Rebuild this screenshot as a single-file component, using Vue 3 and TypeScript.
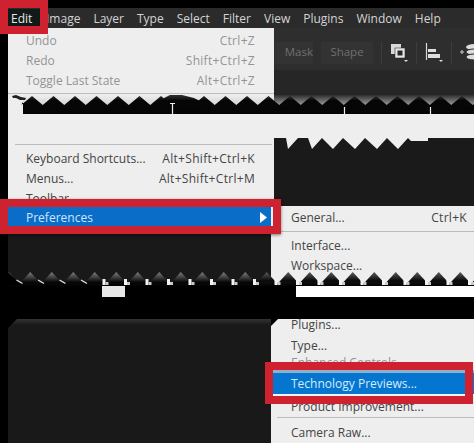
<script setup lang="ts">
const menus = ['Image', 'Layer', 'Type', 'Select', 'Filter', 'View', 'Plugins', 'Window', 'Help']

function zig(start: number, end: number, period: number, high: number, low: number): string {
  const pts: string[] = []
  for (let x = start, k = 0; x <= end; x += period / 2, k++) {
    pts.push(`${x},${k % 2 ? high : low}`)
  }
  return pts.join(' ')
}

const ridge = zig(13.25, 480, 21.5, 1, 10)
const tearBlack = `15,19 15,7 ${ridge} 480,19`
const tearBlob = '4,1 8,0 13,2 18,3 17,5 12,5 8,3 5,3'
const peakBlob = '150,9 156,3 162,0 170,-1 178,1 186,3 192,6 198,9 190,12 165,12'
const notch = '12,0 14,11 24,0 34,0 38,11 48,0 59,11 69,0 81,11 91,0 103,11 113,0 124,11 134,0 137,3 154,3 154,0'
const peaks = Array.from({ length: 23 }, (_, k) => 0.75 + k * 21.5)
const valleys = Array.from({ length: 22 }, (_, k) => 11.5 + k * 21.5)
const dashes = valleys.slice(0, 4)
const blocks = valleys.slice(4)
</script>

<template>
  <div class="page">
    <section class="top">
      <nav class="menubar">
        <span class="edit">Edit</span>
        <span v-for="m in menus" :key="m" class="menu-label">{{ m }}</span>
      </nav>
      <div class="top-body">
        <div class="menu menu-top">
          <div class="row disabled"><span>Undo</span><span class="keys">Ctrl+Z</span></div>
          <div class="row disabled"><span>Redo</span><span class="keys">Shift+Ctrl+Z</span></div>
          <div class="row disabled"><span>Toggle Last State</span><span class="keys">Alt+Ctrl+Z</span></div>
          <div class="sep"></div>
        </div>
        <div class="toolbar">
          <div class="tools">
            <span class="tbtn mask">Mask</span>
            <span class="tbtn shape">Shape</span>
            <i class="vsep"></i>
            <svg class="ticon" width="18" height="18" viewBox="0 0 18 18">
              <rect x="1" y="0" width="10" height="10" fill="#d8d8d8" />
              <rect x="5" y="4" width="10" height="10" fill="#e8e8e8" stroke="#2e2e2e" stroke-width="0.6" />
              <rect x="7.5" y="6.5" width="5" height="5" fill="#2a2a2a" />
              <path d="M14 16h4l-2 2z" fill="#ddd" />
            </svg>
            <i class="vsep"></i>
            <svg class="ticon" width="18" height="18" viewBox="0 0 18 18">
              <path d="M1.5 -1v17" stroke="#d8d8d8" stroke-width="1.2" />
              <rect x="3" y="5" width="8" height="3" fill="#ddd" />
              <rect x="3" y="10" width="12" height="4" fill="#ddd" />
              <path d="M14 16h4l-2 2z" fill="#ddd" />
            </svg>
            <i class="vsep"></i>
            <svg class="ticon" width="18" height="18" viewBox="0 0 18 18">
              <path d="M0 8h4M2 6v4" stroke="#ccc" />
              <ellipse cx="14" cy="3" rx="8" ry="3" fill="#ddd" />
              <ellipse cx="14" cy="8" rx="8" ry="3" fill="#ddd" stroke="#2e2e2e" />
              <ellipse cx="14" cy="13" rx="8" ry="3" fill="#ddd" stroke="#2e2e2e" />
            </svg>
          </div>
        </div>
      </div>
    </section>

    <svg class="tear" width="466" height="19" viewBox="0 0 466 19">
      <defs>
        <linearGradient id="bodyA" gradientUnits="userSpaceOnUse" x1="0" x2="0" y1="1" y2="11">
          <stop offset="0" stop-color="#2c2c2c" />
          <stop offset="0.45" stop-color="#060606" />
        </linearGradient>
        <linearGradient id="sideA" x1="0" x2="0" y1="0" y2="1">
          <stop offset="0" stop-color="#2f2f2f" />
          <stop offset="1" stop-color="#9a9a9a" />
        </linearGradient>
        <linearGradient id="leftA" x1="0" x2="0" y1="0" y2="1">
          <stop offset="0" stop-color="#eeeeee" />
          <stop offset="1" stop-color="#d4d4d4" />
        </linearGradient>
      </defs>
      <rect x="0" y="0" width="266" height="19" fill="#eeeeee" />
      <rect x="15" y="0" width="251" height="10" fill="url(#leftA)" />
      <rect x="266" y="0" width="200" height="10" fill="url(#sideA)" />
      <polygon :points="tearBlack" fill="url(#bodyA)" />
      <rect x="15" y="11" width="451" height="8" fill="#050505" />
      <polygon :points="tearBlob" fill="#222" />
      <polygon :points="peakBlob" fill="url(#bodyA)" />
      <path d="M164.5 9v10M162 8.5h5M336.5 12v7M422.5 12v7" stroke="#eeeeee" stroke-width="1.2" />
    </svg>

    <section class="middle">
      <div class="menu menu-mid">
        <div class="sep sep-mid"></div>
        <div class="row"><span>Keyboard Shortcuts...</span><span class="keys">Alt+Shift+Ctrl+K</span></div>
        <div class="row"><span>Menus...</span><span class="keys">Alt+Shift+Ctrl+M</span></div>
        <div class="row"><span>Toolbar</span><span></span></div>
      </div>
      <div class="dark-side">
        <svg class="notch" width="200" height="12" viewBox="0 0 200 12">
          <polygon :points="notch" fill="#eeeeee" />
        </svg>
      </div>
    </section>

    <section class="prefs">
      <div class="prefs-left">
        <div class="row active">
          <span>Preferences</span>
          <svg width="7" height="11" viewBox="0 0 7 11"><path d="M0 0l7 5.5L0 11z" fill="#fff" /></svg>
        </div>
      </div>
      <div class="submenu sub-a">
        <div class="row row-sub"><span>General...</span><span class="keys">Ctrl+K</span></div>
        <div class="sep sep-general"></div>
        <div class="row row-sub"><span>Interface...</span></div>
        <div class="row row-sub"><span>Workspace...</span></div>
      </div>
    </section>

    <svg class="tear" width="466" height="14" viewBox="0 0 466 14">
      <defs>
        <linearGradient id="ridgeL" x1="0" x2="0" y1="0" y2="1">
          <stop offset="0" stop-color="#808080" />
          <stop offset="0.85" stop-color="#060606" />
        </linearGradient>
        <linearGradient id="ridgeR" x1="0" x2="0" y1="0" y2="1">
          <stop offset="0" stop-color="#5c5c5c" />
          <stop offset="0.7" stop-color="#0c0c0c" />
        </linearGradient>
      </defs>
      <rect x="0" y="0" width="263" height="14" fill="#191919" />
      <rect x="263" y="0" width="203" height="14" fill="#eeeeee" />
      <polygon
        v-for="x in peaks"
        :key="x"
        :points="`${x - 11},12 ${x},0 ${x + 11},12`"
        :fill="x < 255 ? 'url(#ridgeL)' : 'url(#ridgeR)'"
      />
      <rect x="0" y="12" width="466" height="2" fill="#050505" />
      <polygon points="0,0 13,13 0,13" fill="#000" />
      <path
        v-for="x in dashes"
        :key="`d${x}`"
        :d="`M${x - 3} 8l6 3.5`"
        stroke="#e8e8e8"
        stroke-width="1.2"
      />
      <g v-for="x in blocks" :key="`b${x}`">
        <rect :x="x - 3" y="7" width="3" height="6" fill="#f2f2f2" />
        <rect :x="x" y="10" width="3" height="3" fill="#c8c8dc" />
      </g>
    </svg>

    <section class="gap">
      <div class="strips">
        <i class="strip-a"></i>
        <i class="strip-b"></i>
      </div>
    </section>

    <section class="bottom">
      <div class="bottom-left"></div>
      <div class="submenu sub-b">
        <div class="row row-sub torn"><span>Plugins...</span></div>
        <div class="row row-sub"><span>Type...</span></div>
        <div class="row row-sub disabled enhanced"><span>Enhanced Controls</span></div>
        <div class="row row-sub tech"><span>Technology Previews...</span></div>
        <div class="row row-sub"><span>Product Improvement...</span></div>
        <div class="sep sep-product"></div>
        <div class="row row-sub"><span>Camera Raw...</span></div>
      </div>
    </section>

    <div class="callout callout-edit"></div>
    <div class="callout callout-prefs"></div>
    <div class="callout callout-tech"></div>
  </div>
</template>

<style scoped>
.page {
  position: relative;
  width: 474px;
  height: 443px;
  box-sizing: border-box;
  padding: 8px 0 0 8px;
  background: #000;
  overflow: hidden;
  font-family: "Open Sans", "Noto Sans", sans-serif;
  font-size: 12px;
  color: #444444;
}
.menubar {
  display: flex;
  align-items: center;
  gap: 13px;
  height: 20px;
  background: #2b2b2b;
  color: #d4d4d4;
  font-size: 12px;
  white-space: nowrap;
}
.edit {
  width: 33px;
  height: 19px;
  line-height: 19px;
  padding-left: 3px;
  box-sizing: border-box;
  background: #101a18;
  color: #e8e8e8;
  margin-right: -8px;
}
.top-body {
  display: flex;
  height: 67px;
}
.menu {
  width: 266px;
  flex: none;
  background: #eeeeee;
  box-sizing: border-box;
}
.menu-top {
  padding-top: 2px;
}
.row {
  display: flex;
  align-items: center;
  justify-content: space-between;
  height: 20px;
  padding: 0 19px 0 18px;
  white-space: nowrap;
}
.keys {
  letter-spacing: 0.3px;
}
.disabled {
  color: #949494;
}
.sep {
  height: 1px;
  background: #bcbcbc;
  margin-top: 3px;
}
.toolbar {
  flex: 1;
  background: #262626;
}
.tools {
  display: flex;
  align-items: center;
  height: 42px;
  gap: 8px;
  padding: 0 0 0 1px;
  background: #2e2e2e;
}
.tbtn {
  height: 22px;
  line-height: 20px;
  margin-top: 8px;
  background: #333333;
  color: #707070;
  text-align: center;
  font-size: 11.5px;
}
.mask {
  width: 38px;
  text-align: right;
}
.shape {
  width: 52px;
}
.vsep {
  width: 1px;
  height: 22px;
  margin-top: 8px;
  background: #3c3c3c;
}
.ticon {
  flex: none;
  margin-top: 8px;
  overflow: visible;
}
.tear {
  display: block;
}
.middle {
  display: flex;
  height: 92px;
}
.menu-mid {
  padding-top: 30px;
}
.sep-mid {
  margin: 0 2px 3px 7px;
}
.dark-side {
  flex: 1;
  padding-top: 24px;
  background: linear-gradient(#eeeeee 24px, #1a1a1a 24px);
}
.notch {
  display: block;
}
.prefs {
  display: flex;
  height: 66px;
}
.prefs-left {
  width: 263px;
  flex: none;
  background: #191919;
}
.active {
  background: #0a6ec8;
  color: #cfe6fb;
  padding-right: 4px;
  border-top: 1px solid #9aa4ad;
  height: 21px;
  box-sizing: border-box;
}
.submenu {
  flex: 1;
  background: #eeeeee;
}
.row-sub {
  padding: 0 7px 0 20px;
}
.sub-a {
  padding-top: 1px;
  overflow: hidden;
}
.sep-general {
  margin: 4px 0 3px 6px;
}
.gap {
  height: 33px;
  margin-left: -8px;
}
.strips {
  display: flex;
  height: 11px;
}
.strip-a {
  width: 23px;
  margin-left: 102px;
  background: #e8e8e8;
}
.strip-b {
  flex: 1;
  margin-left: 171px;
  background: #ffffff;
}
.bottom {
  display: flex;
  height: 124px;
}
.bottom-left {
  width: 263px;
  flex: none;
  background: linear-gradient(#333333, #191919 6px);
  clip-path: polygon(9px 0, 100% 0, 100% 100%, 0 100%, 0 9px);
}
.sub-b {
  position: relative;
}
.sub-b::before {
  content: "";
  position: absolute;
  left: 0;
  top: 0;
  width: 7px;
  height: 7px;
  background: #000;
  clip-path: polygon(0 0, 100% 0, 0 100%);
}
.torn {
  height: 12px;
  line-height: 12px;
  margin-bottom: 4px;
}
.enhanced {
  height: 15px;
}
.tech {
  background: #0576cf;
  color: #d6ebfc;
  height: 24px;
  box-sizing: border-box;
  border-top: 3px solid #8fb0cc;
  box-shadow: 0 2px 0 #f4f4f4;
  margin-bottom: 2px;
}
.sep-product {
  margin: 1px 0 4px 6px;
}
.callout {
  position: absolute;
  box-sizing: border-box;
  border: 8px solid #cf2230;
}
.callout-edit {
  left: 0;
  top: 0;
  width: 48px;
  height: 34px;
}
.callout-prefs {
  left: 0;
  top: 199px;
  width: 281px;
  height: 35px;
  box-shadow: 0 1px 3px rgba(0, 0, 0, 0.5);
}
.callout-tech {
  left: 265px;
  top: 362px;
  width: 208px;
  height: 42px;
}
</style>
